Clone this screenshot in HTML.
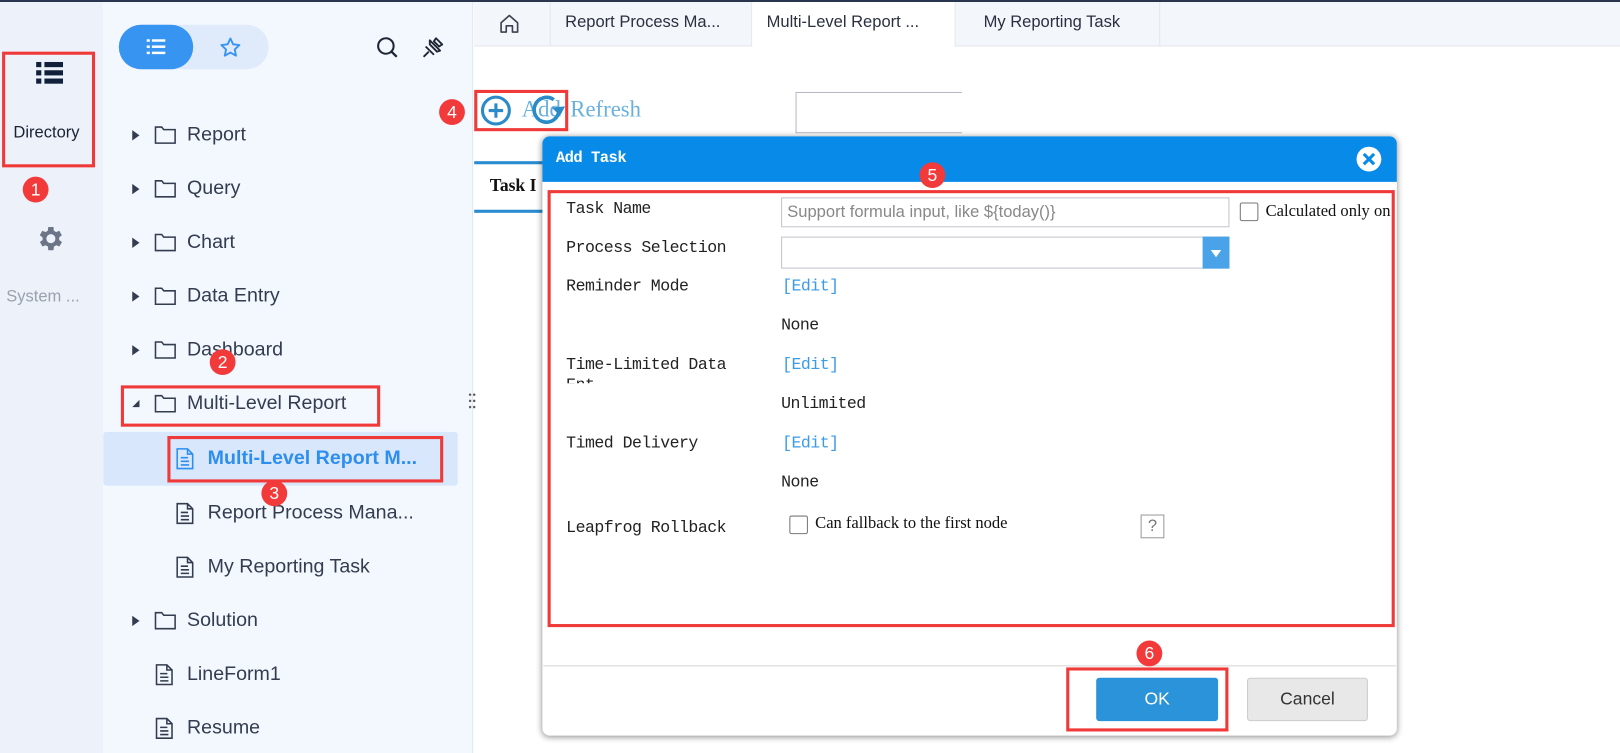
<!DOCTYPE html>
<html><head><meta charset="utf-8"><style>
*{margin:0;padding:0;box-sizing:border-box}
html,body{width:1620px;height:753px;overflow:hidden;background:#fff}
#w{position:absolute;left:0;top:0;width:1568px;height:729px;transform:scale(1.03316);transform-origin:0 0;font-family:"Liberation Sans",sans-serif}
.a{position:absolute}
.badge{position:absolute;width:25px;height:25px;border-radius:50%;background:#f23a3a;color:#fff;font-size:17px;text-align:center;line-height:25px;font-family:"Liberation Sans",sans-serif}
.rb{position:absolute;border:3px solid #f03a3a}
.ti{position:absolute;font-size:19px;color:#333d4f;line-height:22px}
.arr{position:absolute;width:0;height:0;border-top:5px solid transparent;border-bottom:5px solid transparent;border-left:7px solid #333d4f}
.mono{font-family:"Liberation Mono",monospace;font-size:16px;color:#222;position:absolute;letter-spacing:-0.5px}
.ser{font-family:"Liberation Serif",serif;position:absolute}
.edit{color:#3a9be8}
</style></head><body><div id="w">
<div class="a" style="left:0;top:0;width:1568px;height:2px;background:#2a3550"></div>
<!-- left rail -->
<div class="a" style="left:0;top:2px;width:100px;height:727px;background:#edf2fa"></div>
<svg class="a" style="left:34px;top:58px" width="28" height="26" viewBox="0 0 28 26"><g fill="#13203b"><rect x="1" y="2" width="5" height="5"/><rect x="9" y="2" width="18" height="5"/><rect x="1" y="10" width="5" height="5"/><rect x="9" y="10" width="18" height="5"/><rect x="1" y="18" width="5" height="5"/><rect x="9" y="18" width="18" height="5"/></g></svg>
<div class="a" style="left:13px;top:120px;font-size:16px;color:#1a2233">Directory</div>
<div class="rb" style="left:2px;top:50px;width:90px;height:112px"></div>
<div class="badge" style="left:22px;top:171px">1</div>
<svg class="a" style="left:33px;top:216px" width="30" height="30" viewBox="0 0 24 24"><path fill="#6c7587" d="M19.4 13a7.5 7.5 0 0 0 0-2l2.1-1.6-2-3.5-2.5 1a7 7 0 0 0-1.7-1L15 3h-4l-.4 2.9a7 7 0 0 0-1.7 1l-2.5-1-2 3.5L6.6 11a7.5 7.5 0 0 0 0 2l-2.1 1.6 2 3.5 2.5-1a7 7 0 0 0 1.7 1L11 21h4l.4-2.9a7 7 0 0 0 1.7-1l2.5 1 2-3.5zM13 15.5a3.5 3.5 0 1 1 0-7 3.5 3.5 0 0 1 0 7z"/></svg>
<div class="a" style="left:6px;top:279px;font-size:16px;color:#9aa1ad">System ...</div>
<!-- sidebar -->
<div class="a" style="left:100px;top:2px;width:358px;height:727px;background:#f3f7fe;border-right:1px solid #e2e7ef"></div>
<div class="a" style="left:115px;top:24px;width:145px;height:43px;border-radius:22px;background:#dfeafb"></div>
<div class="a" style="left:115px;top:24px;width:72px;height:43px;border-radius:22px;background:#3894f1"></div>
<svg class="a" style="left:141px;top:36px" width="20" height="18" viewBox="0 0 20 18"><g fill="#fff"><rect x="1" y="2" width="3" height="2.4"/><rect x="6" y="2" width="13" height="2.4"/><rect x="1" y="8" width="3" height="2.4"/><rect x="6" y="8" width="13" height="2.4"/><rect x="1" y="14" width="3" height="2.4"/><rect x="6" y="14" width="13" height="2.4"/></g></svg>
<svg class="a" style="left:212px;top:35px" width="22" height="22" viewBox="0 0 24 24"><path d="M12 2.5l2.9 6.1 6.6.8-4.9 4.6 1.3 6.6L12 17.3l-5.9 3.3 1.3-6.6-4.9-4.6 6.6-.8z" fill="none" stroke="#3894f1" stroke-width="2" stroke-linejoin="round"/></svg>
<svg class="a" style="left:363px;top:34px" width="24" height="24" viewBox="0 0 24 24"><circle cx="10.5" cy="10.5" r="7.5" fill="none" stroke="#1e2535" stroke-width="2"/><path d="M16 16l5 5" stroke="#1e2535" stroke-width="2.2"/></svg>
<svg class="a" style="left:406px;top:33px" width="26" height="26" viewBox="0 0 26 26"><g fill="none" stroke="#1e2535" stroke-width="1.8" stroke-linejoin="round"><path d="M10 6l10 10-3 1-7-7z"/><path d="M16 4l6 6-3 2-5-5z"/><path d="M9 17l-5 5"/><path d="M6 12l8 8"/></g></svg>
<!-- tree -->
<div class="arr" style="left:128px;top:126px"></div>
<svg class="a" style="left:149px;top:121px" width="22" height="19" viewBox="0 0 22 19"><path d="M1.5 2h6l2 2.5h11v13h-19z" fill="none" stroke="#333d4f" stroke-width="1.5"/></svg>
<div class="ti" style="left:181px;top:120px">Report</div>
<div class="arr" style="left:128px;top:178px"></div>
<svg class="a" style="left:149px;top:173px" width="22" height="19" viewBox="0 0 22 19"><path d="M1.5 2h6l2 2.5h11v13h-19z" fill="none" stroke="#333d4f" stroke-width="1.5"/></svg>
<div class="ti" style="left:181px;top:172px">Query</div>
<div class="arr" style="left:128px;top:230px"></div>
<svg class="a" style="left:149px;top:225px" width="22" height="19" viewBox="0 0 22 19"><path d="M1.5 2h6l2 2.5h11v13h-19z" fill="none" stroke="#333d4f" stroke-width="1.5"/></svg>
<div class="ti" style="left:181px;top:224px">Chart</div>
<div class="arr" style="left:128px;top:282px"></div>
<svg class="a" style="left:149px;top:277px" width="22" height="19" viewBox="0 0 22 19"><path d="M1.5 2h6l2 2.5h11v13h-19z" fill="none" stroke="#333d4f" stroke-width="1.5"/></svg>
<div class="ti" style="left:181px;top:276px">Data Entry</div>
<div class="arr" style="left:128px;top:334px"></div>
<svg class="a" style="left:149px;top:329px" width="22" height="19" viewBox="0 0 22 19"><path d="M1.5 2h6l2 2.5h11v13h-19z" fill="none" stroke="#333d4f" stroke-width="1.5"/></svg>
<div class="ti" style="left:181px;top:328px">Dashboard</div>
<div class="a" style="left:128px;top:387px;width:0;height:0;border-left:7px solid transparent;border-bottom:7px solid #333d4f"></div>
<svg class="a" style="left:149px;top:381px" width="22" height="19" viewBox="0 0 22 19"><path d="M1.5 2h6l2 2.5h11v13h-19z" fill="none" stroke="#333d4f" stroke-width="1.5"/></svg>
<div class="ti" style="left:181px;top:380px">Multi-Level Report</div>
<div class="a" style="left:100px;top:418px;width:343px;height:52px;background:#d8e7fb;border-radius:3px"></div>
<svg class="a" style="left:170px;top:433px" width="18" height="22" viewBox="0 0 18 22"><path d="M1.5 1.5h10l5 5v14h-15z M11.5 1.5v5h5 M5 10h7 M5 13.5h8 M5 17h8" fill="none" stroke="#2d8ef0" stroke-width="1.5"/></svg>
<div class="ti" style="left:201px;top:433px;color:#2d8ef0;font-weight:bold">Multi-Level Report M...</div>
<svg class="a" style="left:170px;top:486px" width="18" height="22" viewBox="0 0 18 22"><path d="M1.5 1.5h10l5 5v14h-15z M11.5 1.5v5h5 M5 10h7 M5 13.5h8 M5 17h8" fill="none" stroke="#333d4f" stroke-width="1.5"/></svg>
<div class="ti" style="left:201px;top:486px">Report Process Mana...</div>
<svg class="a" style="left:170px;top:538px" width="18" height="22" viewBox="0 0 18 22"><path d="M1.5 1.5h10l5 5v14h-15z M11.5 1.5v5h5 M5 10h7 M5 13.5h8 M5 17h8" fill="none" stroke="#333d4f" stroke-width="1.5"/></svg>
<div class="ti" style="left:201px;top:538px">My Reporting Task</div>
<div class="arr" style="left:128px;top:596px"></div>
<svg class="a" style="left:149px;top:591px" width="22" height="19" viewBox="0 0 22 19"><path d="M1.5 2h6l2 2.5h11v13h-19z" fill="none" stroke="#333d4f" stroke-width="1.5"/></svg>
<div class="ti" style="left:181px;top:590px">Solution</div>
<svg class="a" style="left:150px;top:642px" width="18" height="22" viewBox="0 0 18 22"><path d="M1.5 1.5h10l5 5v14h-15z M11.5 1.5v5h5 M5 10h7 M5 13.5h8 M5 17h8" fill="none" stroke="#333d4f" stroke-width="1.5"/></svg>
<div class="ti" style="left:181px;top:642px">LineForm1</div>
<svg class="a" style="left:150px;top:694px" width="18" height="22" viewBox="0 0 18 22"><path d="M1.5 1.5h10l5 5v14h-15z M11.5 1.5v5h5 M5 10h7 M5 13.5h8 M5 17h8" fill="none" stroke="#333d4f" stroke-width="1.5"/></svg>
<div class="ti" style="left:181px;top:694px">Resume</div>
<div class="rb" style="left:117px;top:373px;width:251px;height:40px"></div>
<div class="rb" style="left:162px;top:422px;width:267px;height:45px"></div>
<div class="badge" style="left:203px;top:338px">2</div>
<div class="badge" style="left:253px;top:465px">3</div>
<div class="a" style="left:453px;top:379px;width:8px;height:18px;background:radial-gradient(circle,#555 1px,transparent 1.3px) 0 0/4px 6px"></div>
<!-- tabs -->
<div class="a" style="left:459px;top:2px;width:1109px;height:43px;background:#f3f6fb;border-bottom:1px solid #e3e7ee"></div>
<svg class="a" style="left:482px;top:12px" width="22" height="22" viewBox="0 0 22 22"><path d="M3 10L11 3l8 7v9h-5v-6H8v6H3z" fill="none" stroke="#3b4250" stroke-width="1.6" stroke-linejoin="round"/></svg>
<div class="a" style="left:532px;top:2px;width:1px;height:42px;background:#e3e7ee"></div>
<div class="a" style="left:727px;top:2px;width:198px;height:43px;background:#fff;border-left:1px solid #e3e7ee;border-right:1px solid #e3e7ee"></div>
<div class="a" style="left:1122px;top:2px;width:1px;height:42px;background:#e3e7ee"></div>
<div class="a" style="left:547px;top:13px;font-size:16px;color:#2a3040">Report Process Ma...</div>
<div class="a" style="left:742px;top:13px;font-size:16px;color:#2a3040">Multi-Level Report ...</div>
<div class="a" style="left:952px;top:13px;font-size:16px;color:#2a3040">My Reporting Task</div>
<!-- toolbar -->
<svg class="a" style="left:464px;top:91px" width="32" height="32" viewBox="0 0 32 32"><circle cx="16" cy="16" r="13" fill="none" stroke="#2a8bc8" stroke-width="3"/><path d="M16 9v14M9 16h14" stroke="#2a8bc8" stroke-width="3"/></svg>
<div class="ser" style="left:505px;top:93px;font-size:22px;color:#6ab0dc">Add</div>
<svg class="a" style="left:512px;top:90px" width="36" height="34" viewBox="0 0 36 34"><path d="M29 16a12 12 0 1 1-5-9.5" fill="none" stroke="#2a8bc8" stroke-width="3.5"/><path d="M22 14l8 8 5-9z" fill="#2a8bc8"/></svg>
<div class="ser" style="left:552px;top:93px;font-size:22px;color:#6ab0dc">Refresh</div>
<div class="rb" style="left:459px;top:87px;width:91px;height:40px"></div>
<div class="badge" style="left:425px;top:96px">4</div>
<div class="a" style="left:770px;top:89px;width:161px;height:40px;border:1px solid #b8b8c8;border-right:none"></div>
<div class="a" style="left:459px;top:156px;width:70px;height:3px;background:#2a8bd0"></div>
<div class="a" style="left:459px;top:203px;width:70px;height:3px;background:#2a8bd0"></div>
<div class="ser" style="left:474px;top:170px;font-size:17px;font-weight:bold;color:#111">Task I</div>
<!-- dialog -->
<div class="a" style="left:525px;top:132px;width:827px;height:580px;background:#fff;border-radius:7px;box-shadow:0 1px 6px rgba(0,0,0,.45)"></div>
<div class="a" style="left:525px;top:132px;width:827px;height:44px;background:#088ae8;border-radius:7px 7px 0 0"></div>
<div class="a" style="left:538px;top:145px;font-family:'Liberation Mono',monospace;font-weight:bold;font-size:15px;color:#fff;letter-spacing:-0.5px">Add Task</div>
<svg class="a" style="left:1312px;top:141px" width="26" height="26" viewBox="0 0 26 26"><circle cx="13" cy="13" r="12" fill="#fff"/><path d="M8 8l10 10M18 8L8 18" stroke="#088ae8" stroke-width="3"/></svg>
<div class="mono" style="left:548px;top:193px">Task Name</div>
<div class="a" style="left:756px;top:191px;width:434px;height:29px;border:1px solid #c4c4cc;font-size:16px;color:#888;padding:5px 5px;line-height:18px">Support formula input, like ${today()}</div>
<div class="a" style="left:1200px;top:196px;width:18px;height:18px;border:1px solid #777;border-radius:2px;background:#fff"></div>
<div class="a" style="left:1225px;top:196px;width:124px;overflow:hidden;white-space:nowrap;font-family:'Liberation Serif',serif;font-size:16px;color:#111">Calculated only on</div>
<div class="mono" style="left:548px;top:231px">Process Selection</div>
<div class="a" style="left:756px;top:229px;width:434px;height:31px;border:1px solid #c4c4cc"></div>
<div class="a" style="left:1164px;top:229px;width:26px;height:31px;background:#4aa3e8"></div>
<div class="a" style="left:1172px;top:242px;width:0;height:0;border-left:5px solid transparent;border-right:5px solid transparent;border-top:7px solid #fff"></div>
<div class="mono" style="left:548px;top:268px">Reminder Mode</div>
<div class="mono edit" style="left:757px;top:268px">[Edit]</div>
<div class="mono" style="left:756px;top:306px">None</div>
<div class="mono" style="left:548px;top:344px">Time-Limited Data</div>
<div class="a" style="left:548px;top:365px;width:40px;height:6px;overflow:hidden"><div class="mono" style="left:0;top:-1px">Ent</div></div>
<div class="mono edit" style="left:757px;top:344px">[Edit]</div>
<div class="mono" style="left:756px;top:382px">Unlimited</div>
<div class="mono" style="left:548px;top:420px">Timed Delivery</div>
<div class="mono edit" style="left:757px;top:420px">[Edit]</div>
<div class="mono" style="left:756px;top:458px">None</div>
<div class="mono" style="left:548px;top:502px">Leapfrog Rollback</div>
<div class="a" style="left:764px;top:499px;width:18px;height:18px;border:1px solid #777;border-radius:2px"></div>
<div class="ser" style="left:789px;top:498px;font-size:16px;color:#111">Can fallback to the first node</div>
<div class="a" style="left:1104px;top:498px;width:23px;height:23px;border:1px solid #999;font-size:16px;color:#777;text-align:center;line-height:21px">?</div>
<div class="rb" style="left:530px;top:184px;width:820px;height:423px"></div>
<div class="badge" style="left:890px;top:157px">5</div>
<div class="a" style="left:526px;top:644px;width:825px;height:1px;background:#d4d4d4"></div>
<div class="a" style="left:1061px;top:656px;width:118px;height:42px;background:#2a93d9;border-radius:3px;color:#fff;font-size:17px;text-align:center;line-height:42px">OK</div>
<div class="a" style="left:1207px;top:656px;width:117px;height:42px;background:#e8e8e8;border:1px solid #ccc;border-radius:3px;color:#333;font-size:17px;text-align:center;line-height:40px">Cancel</div>
<div class="rb" style="left:1032px;top:646px;width:157px;height:62px"></div>
<div class="badge" style="left:1100px;top:620px">6</div>
</div></body></html>
